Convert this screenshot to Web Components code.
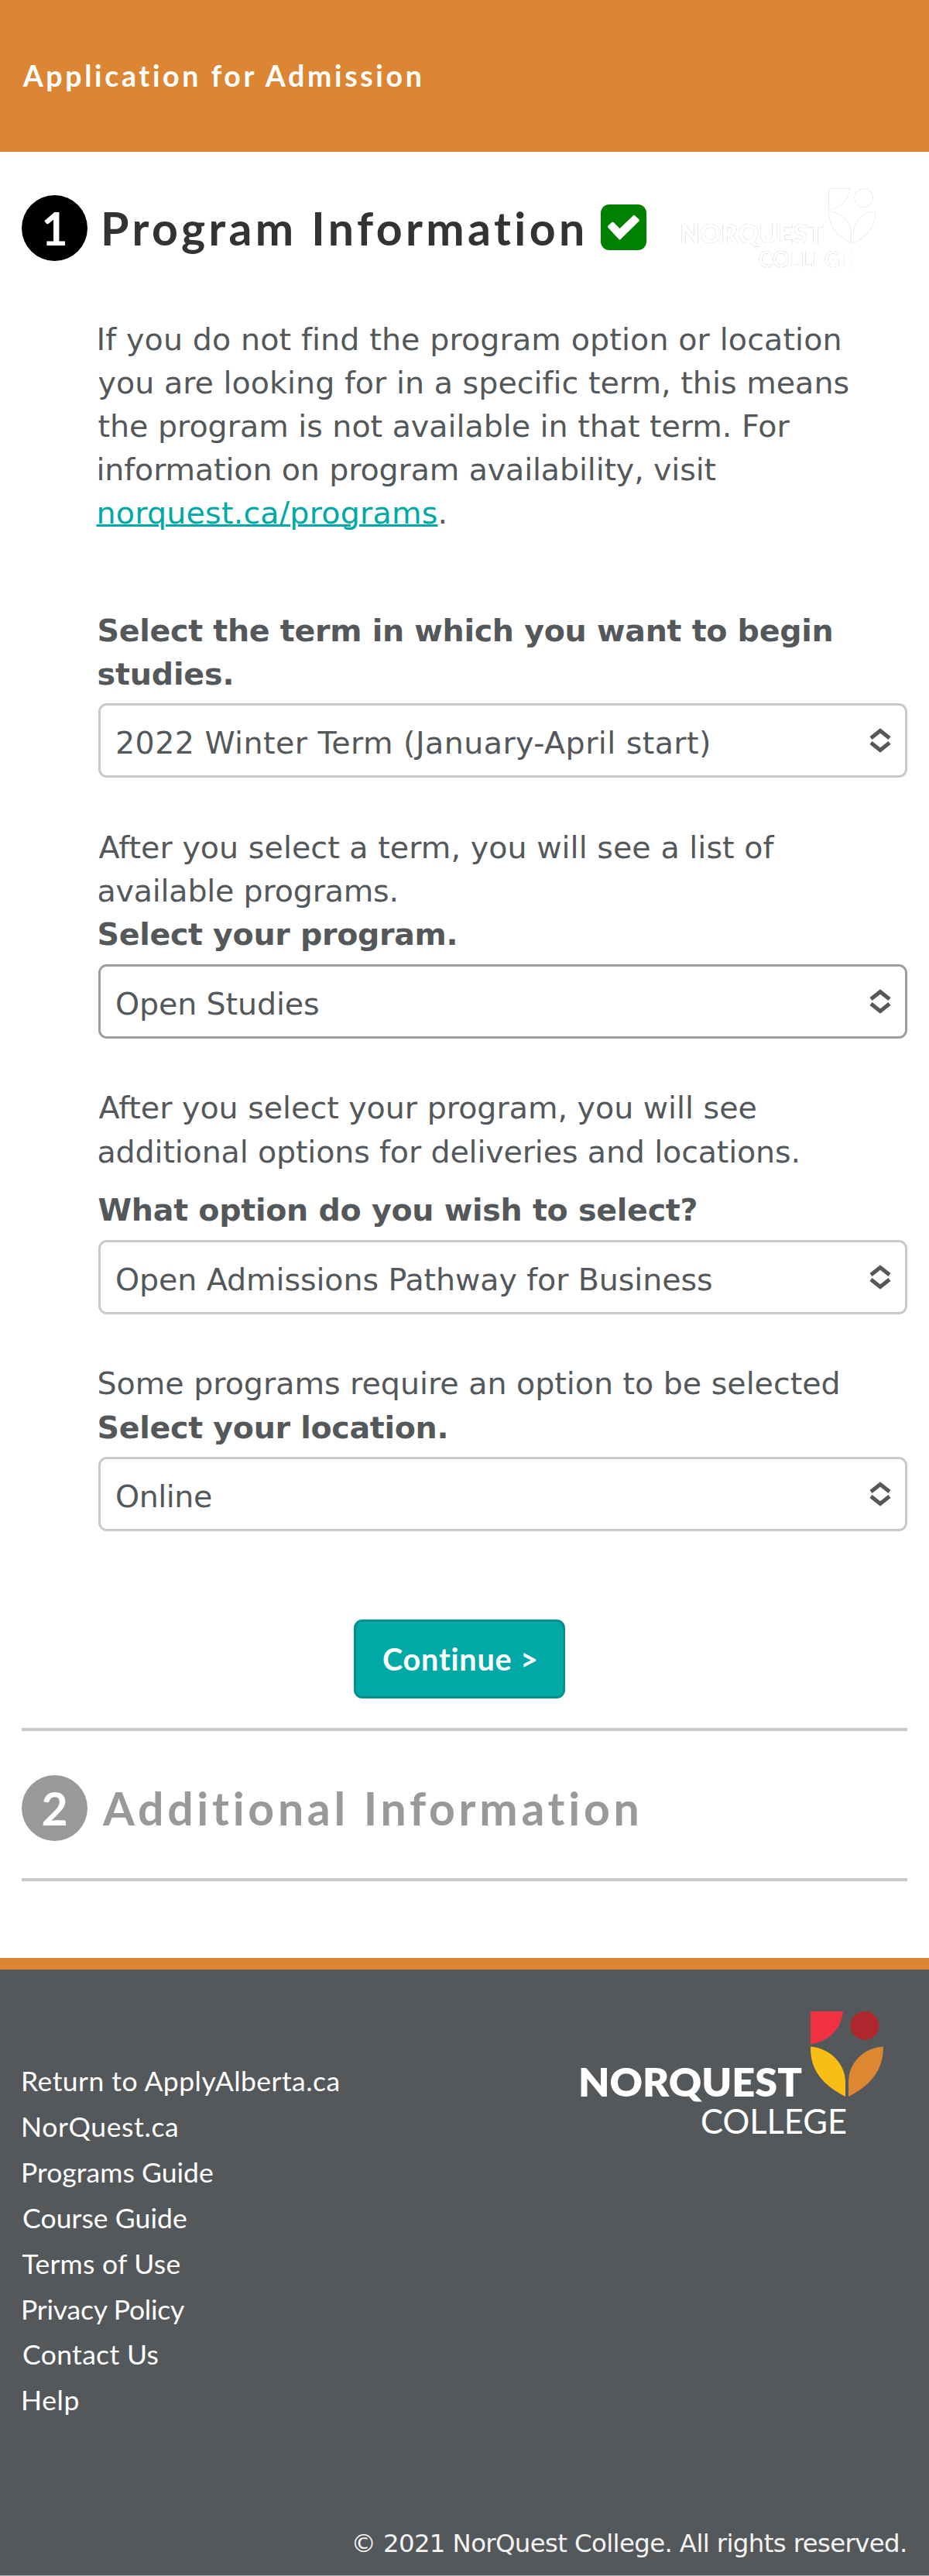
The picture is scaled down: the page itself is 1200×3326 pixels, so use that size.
<!DOCTYPE html>
<html lang="en">
<head>
<meta charset="utf-8">
<title>Application for Admission</title>
<style>
  body {
    margin: 0;
    background: #fff;
    color: #54585a;
    font: 39.6px/56.1px "DejaVu Sans", Verdana, sans-serif;
  }
  a {
    color: #00a8a6;
    text-decoration-thickness: 2.5px;
    text-underline-offset: 1px;
  }
</style>
</head>
<body>
<application-page>
  <page-banner slot="banner"><fit-line measure="515">Application for Admission</fit-line></page-banner>

  <form-section number="1" active>
    <fit-line slot="title" measure="618">Program Information</fit-line>
    <check-mark slot="title"></check-mark>
    <norquest-logo slot="aside" ghost></norquest-logo>

    <help-text class="intro">
      <fit-line measure="957">If you do not find the program option or location</fit-line>
      <fit-line measure="968">you are looking for in a specific term, this means</fit-line>
      <fit-line measure="893">the program is not available in that term. For</fit-line>
      <fit-line measure="797">information on program availability, visit</fit-line>
      <fit-line measure="447"><a href="#programs">norquest.ca/programs</a>.</fit-line>
    </help-text>

    <select-field style="margin-top: 95.6px">
      <fit-line slot="label" measure="947">Select the term in which you want to begin</fit-line>
      <fit-line slot="label" measure="171">studies.</fit-line>
      <fit-line measure="765">2022 Winter Term (January-April start)</fit-line>
      <fit-line slot="help" measure="873">After you select a term, you will see a list of</fit-line>
      <fit-line slot="help" measure="384">available programs.</fit-line>
    </select-field>

    <select-field focused>
      <fit-line slot="label" measure="460">Select your program.</fit-line>
      <fit-line measure="260">Open Studies</fit-line>
      <fit-line slot="help" measure="849">After you select your program, you will see</fit-line>
      <fit-line slot="help" measure="903">additional options for deliveries and locations.</fit-line>
    </select-field>

    <select-field style="margin-top: 19.6px">
      <fit-line slot="label" measure="772">What option do you wish to select?</fit-line>
      <fit-line measure="768">Open Admissions Pathway for Business</fit-line>
      <fit-line slot="help" measure="955">Some programs require an option to be selected</fit-line>
    </select-field>

    <select-field>
      <fit-line slot="label" measure="448">Select your location.</fit-line>
      <fit-line measure="122">Online</fit-line>
    </select-field>

    <action-button slot="actions"><fit-line measure="197">Continue &gt;</fit-line></action-button>
  </form-section>

  <form-section number="2">
    <fit-line slot="title" measure="690.5">Additional Information</fit-line>
  </form-section>

  <page-footer slot="footer">
    <fit-line measure="407.5">Return to ApplyAlberta.ca</fit-line>
    <fit-line measure="199">NorQuest.ca</fit-line>
    <fit-line measure="245">Programs Guide</fit-line>
    <fit-line measure="211">Course Guide</fit-line>
    <fit-line measure="204" style="margin-left: -1.5px">Terms of Use</fit-line>
    <fit-line measure="209">Privacy Policy</fit-line>
    <fit-line measure="173.5">Contact Us</fit-line>
    <fit-line measure="71.5">Help</fit-line>
    <norquest-logo slot="logo"></norquest-logo>
    <fit-line slot="legal" measure="711.5">© 2021 NorQuest College. All rights reserved.</fit-line>
  </page-footer>
</application-page>

<script>
class ShadowElement extends HTMLElement {
  constructor() {
    super();
    this.attachShadow({ mode: "open" });
  }

  connectedCallback() {
    this.shadowRoot.innerHTML = this.template();
  }
}

class ApplicationPage extends ShadowElement {
  template() {
    return `
      <style>
        :host { display: flex; flex-direction: column; min-height: 3326px; box-sizing: border-box; }
        main { flex: 1; padding: 0 28px; }
      </style>
      <slot name="banner"></slot>
      <main><slot></slot></main>
      <slot name="footer"></slot>`;
  }
}

class PageBanner extends ShadowElement {
  template() {
    return `
      <style>
        :host {
          display: flex;
          align-items: center;
          height: 196px;
          padding-left: 28.7px;
          background: #dc8633;
          color: #fff;
          font: bold 37.5px/48px Lato, sans-serif;
        }
      </style>
      <slot></slot>`;
  }
}

class FormSection extends ShadowElement {
  template() {
    return `
      <style>
        :host { display: block; border-bottom: 4px solid #c9c9c9; }
        header { display: flex; align-items: center; height: 85px; padding-top: 57px; color: #999; font: bold 59px/70px Lato, sans-serif; }
        .number { display: grid; place-items: center; width: 85px; height: 85px; margin-right: 19px; border-radius: 50%; background: #999; color: #fff; }
        .content { padding-left: 98.5px; }
        .actions { display: flex; justify-content: center; padding-right: 13px; }
        slot[name="aside"] { display: flex; margin-left: auto; padding-right: 39px; }
        :host([active]) header { padding-top: 56px; color: #333; }
        :host([active]) .number { margin-right: 21px; background: #000; }
        :host([active]) .content { padding-top: 72.5px; }
        :host([active]) .actions { padding-top: 114px; padding-bottom: 38px; }
        :host(:not([active])) { padding-bottom: 48px; }
      </style>
      <header>
        <span class="number">${this.getAttribute("number")}</span>
        <slot name="title"></slot>
        <slot name="aside"></slot>
      </header>
      <div class="content"><slot></slot></div>
      <div class="actions"><slot name="actions"></slot></div>`;
  }
}

class HelpText extends ShadowElement {
  template() {
    return `
      <style>:host { display: block; padding-left: 1px; }</style>
      <slot></slot>`;
  }
}

class SelectField extends ShadowElement {
  template() {
    const help = this.querySelector('[slot="help"]')
      ? `<div class="help"><slot name="help"></slot></div>`
      : "";
    return `
      <style>
        :host { display: block; }
        .label { padding-left: 1px; font-weight: bold; }
        .box {
          display: flex;
          justify-content: space-between;
          align-items: center;
          box-sizing: border-box;
          height: 96px;
          margin-top: 10.5px;
          padding: 0 18px 0 21.5px;
          border: 3.5px solid #c9c9c9;
          border-radius: 11px;
        }
        :host([focused]) .box { border-color: #9b9f9f; }
        .value { padding-top: 6px; }
        .help { padding: 61.7px 0 0 1px; }
        svg { display: block; fill: none; stroke: #54585a; stroke-width: 5; }
      </style>
      <div class="label"><slot name="label"></slot></div>
      <div class="box">
        <div class="value"><slot></slot></div>
        <svg width="28" height="32" viewBox="0 0 28 32"><path d="M2 13 14 3.5 26 13M2 19l12 9.5 12-9.5"/></svg>
      </div>
      ${help}`;
  }
}

class ActionButton extends ShadowElement {
  template() {
    return `
      <style>
        button {
          display: flex;
          align-items: center;
          justify-content: center;
          width: 273px;
          height: 102px;
          padding: 0;
          border: 3px solid #058f8d;
          border-radius: 11px;
          background: #00a8a6;
          color: #fff;
          font: bold 39.6px/48px Lato, sans-serif;
        }
      </style>
      <button type="button"><slot></slot></button>`;
  }
}

class CheckMark extends ShadowElement {
  template() {
    return `
      <style>
        :host { display: block; margin-left: 23.5px; }
        svg { display: block; margin-top: -2px; }
      </style>
      <svg width="59" height="59" viewBox="0 0 59 59">
        <rect width="59" height="59" rx="11" fill="#008000"/>
        <path fill="#fff" d="M9.500 27.500 14.500 22.800Q15.500 22 16.500 23L24.500 31 42 14.200Q43 13.400 44 14.200L49.500 19.300Q50.500 20.500 49.500 21.500L25.500 45Q24.500 46 23.500 45L9.500 30Q8.500 28.700 9.500 27.500z"/>
      </svg>`;
  }
}

class NorquestLogo extends ShadowElement {
  template() {
    return `
      <style>
        :host { display: block; }
        svg { display: block; overflow: visible; width: 400px; height: 175px; fill: #fff; }
        text { font-family: Lato, sans-serif; }
        :host(:not([ghost])) .petal { fill: var(--petal); }
        :host([ghost]) svg {
          width: 257px;
          height: 112.4px;
          margin-top: 10px;
          filter: drop-shadow(0 0 .7px rgba(0, 0, 0, .4));
        }
      </style>
      <svg viewBox="-6 0 400 175">
        <path class="petal" style="--petal: #f13041" d="M297 1h42c-2 23-20 40-42 42z"/>
        <circle class="petal" style="--petal: #b0262e" cx="367" cy="19.5" r="18.5"/>
        <path class="petal" style="--petal: #f8be15" d="M297 46.500c25 2 45 22 45 46v18.500c-26-13-46-32-45-64.500z"/>
        <path class="petal" style="--petal: #dd8733" d="M391 46.500c-25 1-45 21-45 45v19.500c26-13 45-32 45-64.500z"/>
        <text x="-3" y="111" font-size="51.5" font-weight="800" textLength="289" lengthAdjust="spacingAndGlyphs">NORQUEST</text>
        <text x="155" y="159" font-size="44" textLength="189" lengthAdjust="spacingAndGlyphs">COLLEGE</text>
      </svg>`;
  }
}

class PageFooter extends ShadowElement {
  template() {
    return `
      <style>
        :host {
          display: flex;
          flex-direction: column;
          box-sizing: border-box;
          height: 798px;
          padding: 53px 31px 0 30px;
          border-top: 15px solid #dc8633;
          border-bottom: 1px solid #a9abac;
          background: #54585a;
          color: #fff;
        }
        .top { display: flex; justify-content: space-between; }
        nav { padding-top: 62px; font: 35.5px/58.9px Lato, sans-serif; }
        .logo { padding-right: 25px; }
        .legal { margin-top: auto; align-self: flex-end; padding-bottom: 13px; color: #f4f4f4; font-size: 32.4px; }
      </style>
      <div class="top">
        <nav><slot></slot></nav>
        <div class="logo"><slot name="logo"></slot></div>
      </div>
      <div class="legal"><slot name="legal"></slot></div>`;
  }
}

// One line of text, tracked so that its ink spans the given measure.
class FitLine extends ShadowElement {
  template() {
    return `
      <style>
        :host { display: block; }
        span { display: inline-block; white-space: nowrap; font-variant-ligatures: none; }
      </style>
      <span><slot></slot></span>`;
  }

  connectedCallback() {
    super.connectedCallback();
    this.fit();
  }

  fit() {
    const span = this.shadowRoot.querySelector("span");
    const text = this.textContent;
    const { fontWeight, fontSize, fontFamily } = getComputedStyle(span);
    const ctx = document.createElement("canvas").getContext("2d");
    ctx.font = `${fontWeight} ${fontSize} ${fontFamily}`;

    const metrics = ctx.measureText(text);
    const left = -metrics.actualBoundingBoxLeft;
    const right = metrics.width - metrics.actualBoundingBoxRight;
    const ink = span.getBoundingClientRect().width - left - right;
    const tracking = (this.getAttribute("measure") - ink) / (text.length - 1);

    span.style.letterSpacing = `${tracking}px`;
    span.style.marginLeft = `${-left}px`;
    span.style.marginRight = `${-right - tracking}px`;
  }
}

customElements.define("application-page", ApplicationPage);
customElements.define("page-banner", PageBanner);
customElements.define("form-section", FormSection);
customElements.define("help-text", HelpText);
customElements.define("select-field", SelectField);
customElements.define("action-button", ActionButton);
customElements.define("check-mark", CheckMark);
customElements.define("norquest-logo", NorquestLogo);
customElements.define("page-footer", PageFooter);
// Last, so that every line measures itself in its final font.
customElements.define("fit-line", FitLine);
</script>
</body>
</html>
